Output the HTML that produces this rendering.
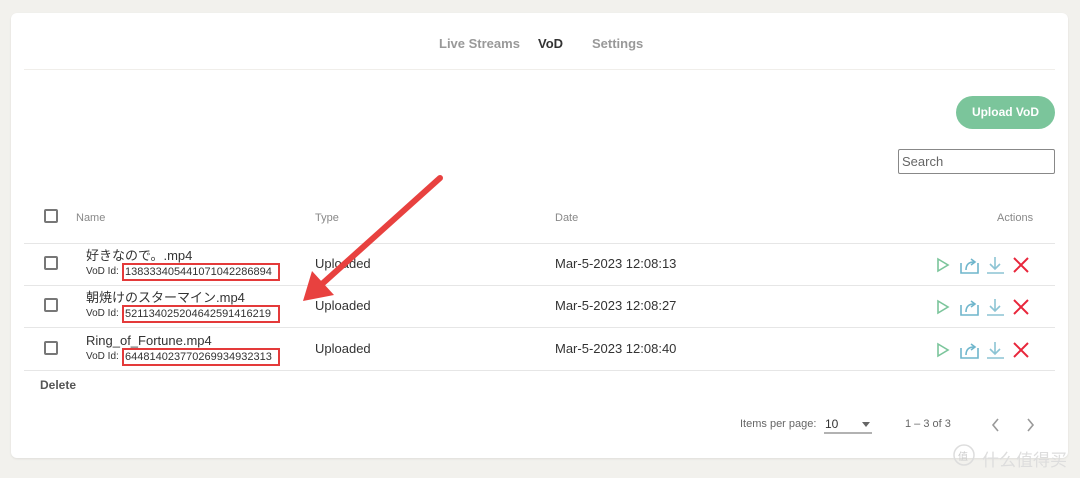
<!DOCTYPE html>
<html><head><meta charset="utf-8"><style>
*{margin:0;padding:0;box-sizing:border-box}
body{width:1080px;height:478px;background:#f2f1ed;font-family:"Liberation Sans","Noto Sans CJK JP",sans-serif;position:relative;overflow:hidden;color:#333}
.card{position:absolute;left:11px;top:13px;width:1057px;height:445px;background:#fff;border-radius:6px;box-shadow:0 1px 2px rgba(0,0,0,.08)}
.a{position:absolute;white-space:nowrap}
.nav{top:37px;font-size:13px;font-weight:bold;color:#999;line-height:14px}
.hl{position:absolute;left:24px;width:1031px;height:1px;background:#e6e6e6}
.cb{position:absolute;left:44px;width:14px;height:14px;border:2px solid #777;border-radius:2px}
.hdr{top:212px;font-size:11px;color:#888;line-height:13px}
.nm{font-size:13px;color:#333;line-height:16px}
.id{font-size:10px;color:#333;line-height:14px}
.dg{font-size:11px;color:#333;line-height:14px;left:125px}
.box{position:absolute;border:2px solid #e43a3a;height:18px;left:122px;width:158px}
.ty{font-size:13px;color:#333;line-height:16px}
</style></head><body>
<div class="card"></div>
<div class="a nav" style="left:439px">Live Streams</div>
<div class="a nav" style="left:538px;color:#333">VoD</div>
<div class="a nav" style="left:592px">Settings</div>
<div class="hl" style="top:69px;background:#f0eeea"></div>
<div class="a" style="left:956px;top:96px;width:99px;height:33px;border-radius:17px;background:#7bc59b;color:#fff;font-size:12px;font-weight:bold;text-align:center;line-height:33px">Upload VoD</div>
<div class="a" style="left:898px;top:149px;width:157px;height:25px;border:1px solid #888;border-radius:2px;font-size:13px;color:#666;padding:4px 3px;line-height:15px">Search</div>
<div class="cb" style="top:209px"></div>
<div class="a hdr" style="left:76px">Name</div>
<div class="a hdr" style="left:315px">Type</div>
<div class="a hdr" style="left:555px">Date</div>
<div class="a hdr" style="left:997px">Actions</div>
<div class="hl" style="top:243px"></div>
<div class="hl" style="top:285px"></div>
<div class="hl" style="top:327px"></div>
<div class="hl" style="top:370px"></div>

<div class="cb" style="top:256px"></div>
<div class="a nm" style="left:86px;top:248px">好きなので。.mp4</div>
<div class="a id" style="left:86px;top:265px">VoD Id:</div>
<div class="a dg" style="top:265px">138333405441071042286894</div>
<div class="box" style="top:263px"></div>
<div class="a ty" style="left:315px;top:256px">Uploaded</div>
<div class="a ty" style="left:555px;top:256px">Mar-5-2023 12:08:13</div>

<div class="cb" style="top:298px"></div>
<div class="a nm" style="left:86px;top:290px">朝焼けのスターマイン.mp4</div>
<div class="a id" style="left:86px;top:307px">VoD Id:</div>
<div class="a dg" style="top:307px">521134025204642591416219</div>
<div class="box" style="top:305px"></div>
<div class="a ty" style="left:315px;top:298px">Uploaded</div>
<div class="a ty" style="left:555px;top:298px">Mar-5-2023 12:08:27</div>

<div class="cb" style="top:341px"></div>
<div class="a nm" style="left:86px;top:333px">Ring_of_Fortune.mp4</div>
<div class="a id" style="left:86px;top:350px">VoD Id:</div>
<div class="a dg" style="top:350px">644814023770269934932313</div>
<div class="box" style="top:348px"></div>
<div class="a ty" style="left:315px;top:341px">Uploaded</div>
<div class="a ty" style="left:555px;top:341px">Mar-5-2023 12:08:40</div>

<svg class="a" style="left:0;top:0" width="1080" height="478">
<defs><g id="ic">
<path d="M938 259 L948 265 L938 271 Z" fill="none" stroke="#7bc59b" stroke-width="1.6"/>
<path d="M961 263 V273 H978 V263" fill="none" stroke="#6fb6cc" stroke-width="1.6"/>
<path d="M966 270 Q966 262 974 262 M971 259 L975 262 L971 265" fill="none" stroke="#6fb6cc" stroke-width="1.6"/>
<path d="M995 257 V269 M990 264 L995 269 L1000 264 M987 273 H1004" fill="none" stroke="#8cc4d4" stroke-width="1.6"/>
<path d="M1014 258 L1028 272 M1028 258 L1014 272" stroke="#e8263b" stroke-width="2"/>
</g></defs>
<use href="#ic"/><use href="#ic" y="42"/><use href="#ic" y="85"/>
<line x1="440" y1="178" x2="322" y2="284" stroke="#e8413f" stroke-width="6" stroke-linecap="round"/>
<path d="M303 301 L312 271 L334 295 Z" fill="#e8413f"/>
<path d="M862 422 L866 427 L870 422 Z" fill="#666"/>
<line x1="824" y1="433" x2="872" y2="433" stroke="#666"/>
<path d="M998 419 L993 425 L998 431" fill="none" stroke="#999" stroke-width="1.6"/>
<path d="M1028 419 L1033 425 L1028 431" fill="none" stroke="#999" stroke-width="1.6"/>
<circle cx="964" cy="455" r="10" fill="none" stroke="#ddd" stroke-width="1.5"/>
</svg>
<div class="a" style="left:40px;top:378px;font-size:12px;font-weight:bold;color:#555">Delete</div>
<div class="a" style="left:740px;top:418px;font-size:11px;color:#666">Items per page:</div>
<div class="a" style="left:825px;top:417px;font-size:12px;color:#333">10</div>
<div class="a" style="left:905px;top:418px;font-size:11px;color:#666">1 – 3 of 3</div>
<div class="a" style="left:958px;top:448px;font-size:10px;color:#ccc">值</div>
<div class="a" style="left:982px;top:446px;font-size:17px;color:#ddd">什么值得买</div>
</body></html>
